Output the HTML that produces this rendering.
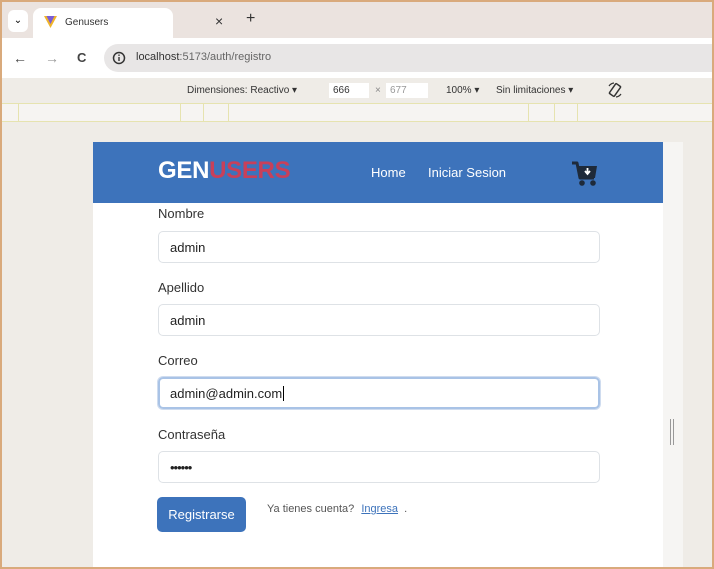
<!DOCTYPE html>
<html><head><meta charset="utf-8"><style>
*{box-sizing:border-box;margin:0;padding:0}
body{width:714px;height:569px;overflow:hidden;font-family:"Liberation Sans",sans-serif;background:#efece7;position:relative}
.frame{position:absolute;inset:0;border:2px solid #d9aa7c;pointer-events:none;z-index:10}
.tabbar{position:absolute;left:0;top:0;width:714px;height:38px;background:#ebe3df}
.tabbtn{position:absolute;left:8px;top:10px;width:20px;height:22px;background:#fff;border-radius:6px;font-size:10px;text-align:center;line-height:22px}
.tab{position:absolute;left:33px;top:8px;width:140px;height:30px;background:#fff;border-radius:8px 8px 0 0}
.tab .t{position:absolute;left:32px;top:9px;font-size:10px;color:#333}
.tab .x{position:absolute;left:182px;top:5px;font-size:14px;color:#333}
.plus{position:absolute;left:246px;top:10px;font-size:16px;color:#333}
.addr{position:absolute;left:0;top:38px;width:714px;height:40px;background:#fff}
.url{position:absolute;left:104px;top:6px;width:610px;height:28px;background:#e8e6e6;border-radius:14px 0 0 14px}
.url span{position:absolute;left:32px;top:7px;font-size:11px;color:#333}
.nav{position:absolute;top:50px;font-size:14px;color:#444}
.dev{position:absolute;left:0;top:78px;width:714px;height:25px;background:#efece7;font-size:10px;color:#333}
.dev .i{position:absolute;top:7px}
.box{position:absolute;top:5px;height:15px;background:#fff;padding:2px 4px}
.ruler{position:absolute;left:0;top:103px;width:714px;height:19px;background:#f6f4f2;border-top:1px solid #e6e3b0;border-bottom:1px solid #e6e3b0}
.ruler i{position:absolute;top:0;width:1px;height:18px;background:#e6e3b0}
.page{position:absolute;left:93px;top:142px;width:570px;height:427px;background:#fff}
.sb{position:absolute;left:663px;top:142px;width:20px;height:427px;background:#f6f5f3}
.hdr{position:absolute;left:0;top:0;width:570px;height:61px;background:#3d73bb}
.logo{position:absolute;left:65px;top:15px;font-size:24px;font-weight:bold;color:#fff;letter-spacing:-0.3px}
.logo b{color:#c8405a}
.lnk{position:absolute;top:23px;font-size:13px;color:#fff}
label{position:absolute;left:65px;font-size:13px;color:#333}
.inp{position:absolute;left:65px;width:442px;height:32px;border:1px solid #dee2e6;border-radius:5px;font-size:13px;color:#222;padding:8px 11px}
.foc{border:2px solid #a9c3e6;box-shadow:0 0 0 1px #cfdcef;padding:7px 10px}
.btn{position:absolute;left:64px;top:355px;width:89px;height:35px;background:#3d73bb;border-radius:5px;color:#fff;font-size:13px;text-align:center;line-height:35px}
.ya{position:absolute;left:174px;top:361px;font-size:11px;color:#555}
.ya a{color:#3d73bb;text-decoration:underline;margin-left:4px}
</style></head><body>
<div class="tabbar">
 <div class="tabbtn">⌄</div>
 <div class="tab"><svg style="position:absolute;left:11px;top:8px" width="13" height="12" viewBox="0 0 13 12"><path d="M0 0H13L6.5 12Z" fill="#f0b429"/><path d="M2.5 0H10.5L6.5 8Z" fill="#7a5cd6"/></svg><span class="t">Genusers</span><span class="x" style="left:182px">×</span></div>
 <div class="plus">+</div>
</div>
<div class="addr">
 <span class="nav" style="left:13px;top:12px">←</span><span class="nav" style="left:45px;top:12px;color:#999">→</span><span class="nav" style="left:77px;top:12px;font-weight:bold;font-size:13px">C</span>
 <div class="url"><svg style="position:absolute;left:8px;top:7px" width="14" height="14"><circle cx="7" cy="7" r="5.5" fill="none" stroke="#333" stroke-width="1.5"/><rect x="6.3" y="6" width="1.4" height="4" fill="#333"/><rect x="6.3" y="3.5" width="1.4" height="1.4" fill="#333"/></svg><span>localhost<span style="position:static;color:#666">:5173/auth/registro</span></span></div>
</div>
<div class="dev">
 <span class="i" style="left:187px">Dimensiones: Reactivo ▾</span>
 <span class="box" style="left:329px;width:40px">666</span><span class="i" style="left:375px;color:#888">×</span>
 <span class="box" style="left:386px;width:42px;color:#999">677</span>
 <span class="i" style="left:446px">100% ▾</span><span class="i" style="left:496px">Sin limitaciones ▾</span>
 <svg style="position:absolute;left:606px;top:3px" width="18" height="18" viewBox="0 0 18 18"><rect x="6" y="3" width="6" height="12" rx="1" fill="none" stroke="#333" stroke-width="1.5" transform="rotate(35 9 9)"/><path d="M3 5A7 7 0 0 1 8 2M15 13A7 7 0 0 1 10 16" fill="none" stroke="#333" stroke-width="1.2"/></svg>
</div>
<div class="ruler"><i style="left:18px"></i><i style="left:180px"></i><i style="left:203px"></i><i style="left:228px"></i><i style="left:528px"></i><i style="left:554px"></i><i style="left:577px"></i></div>
<div class="page">
 <div class="hdr">
  <div class="logo">GEN<b>USERS</b></div>
  <div class="lnk" style="left:278px">Home</div><div class="lnk" style="left:335px">Iniciar Sesion</div>
  <svg style="position:absolute;left:479px;top:19px" width="26" height="26" viewBox="0 0 26 26"><path d="M0 2H5L8 17H22" fill="none" stroke="#1e2a3a" stroke-width="3" stroke-linejoin="round"/><path d="M6 5H25L23 17H8Z" fill="#1e2a3a"/><circle cx="10" cy="22" r="2.8" fill="#1e2a3a"/><circle cx="21" cy="22" r="2.8" fill="#1e2a3a"/><path d="M15.5 7V12M13 10L15.5 13L18 10" stroke="#fff" stroke-width="1.8" fill="none"/></svg>
 </div>
 <label style="top:64px">Nombre</label><div class="inp" style="top:89px">admin</div>
 <label style="top:138px">Apellido</label><div class="inp" style="top:162px">admin</div>
 <label style="top:211px">Correo</label><div class="inp foc" style="top:235px">admin@admin.com<span style="border-left:1px solid #000;margin-left:1px"></span></div>
 <label style="top:285px">Contraseña</label><div class="inp" style="top:309px;letter-spacing:-1px">••••••</div>
 <div class="btn">Registrarse</div>
 <div class="ya">Ya tienes cuenta? <a>Ingresa</a> &nbsp;.</div>
</div>
<div class="sb"><div style="position:absolute;left:7px;top:277px;width:4px;height:26px;border-left:1px solid #999;border-right:1px solid #999"></div></div>
<div class="frame"></div>
</body></html>
